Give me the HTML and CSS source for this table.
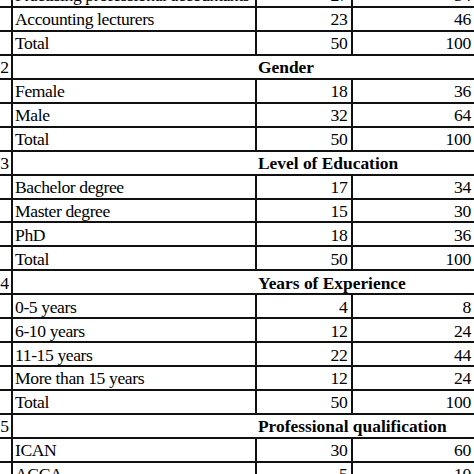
FILE: index.html
```html
<!DOCTYPE html>
<html lang="en">
<head>
<meta charset="utf-8">
<title>Respondent profile</title>
<link rel="stylesheet" href="styles.css">
</head>
<body>
<div class="table">
  <div class="row"><div class="c num"></div><div class="c lbl">Practising professional accountants</div><div class="c val">27</div><div class="c pct">54</div></div>
  <div class="row"><div class="c num"></div><div class="c lbl">Accounting lecturers</div><div class="c val">23</div><div class="c pct">46</div></div>
  <div class="row"><div class="c num"></div><div class="c lbl">Total</div><div class="c val">50</div><div class="c pct">100</div></div>
  <div class="row"><div class="c num">2</div><div class="c gap"></div><div class="c head">Gender</div></div>
  <div class="row"><div class="c num"></div><div class="c lbl">Female</div><div class="c val">18</div><div class="c pct">36</div></div>
  <div class="row"><div class="c num"></div><div class="c lbl">Male</div><div class="c val">32</div><div class="c pct">64</div></div>
  <div class="row"><div class="c num"></div><div class="c lbl">Total</div><div class="c val">50</div><div class="c pct">100</div></div>
  <div class="row"><div class="c num">3</div><div class="c gap"></div><div class="c head">Level of Education</div></div>
  <div class="row"><div class="c num"></div><div class="c lbl">Bachelor degree</div><div class="c val">17</div><div class="c pct">34</div></div>
  <div class="row"><div class="c num"></div><div class="c lbl">Master degree</div><div class="c val">15</div><div class="c pct">30</div></div>
  <div class="row"><div class="c num"></div><div class="c lbl">PhD</div><div class="c val">18</div><div class="c pct">36</div></div>
  <div class="row"><div class="c num"></div><div class="c lbl">Total</div><div class="c val">50</div><div class="c pct">100</div></div>
  <div class="row"><div class="c num">4</div><div class="c gap"></div><div class="c head">Years of Experience</div></div>
  <div class="row"><div class="c num"></div><div class="c lbl">0-5 years</div><div class="c val">4</div><div class="c pct">8</div></div>
  <div class="row"><div class="c num"></div><div class="c lbl">6-10 years</div><div class="c val">12</div><div class="c pct">24</div></div>
  <div class="row"><div class="c num"></div><div class="c lbl">11-15 years</div><div class="c val">22</div><div class="c pct">44</div></div>
  <div class="row"><div class="c num"></div><div class="c lbl">More than 15 years</div><div class="c val">12</div><div class="c pct">24</div></div>
  <div class="row"><div class="c num"></div><div class="c lbl">Total</div><div class="c val">50</div><div class="c pct">100</div></div>
  <div class="row"><div class="c num">5</div><div class="c gap"></div><div class="c head">Professional qualification</div></div>
  <div class="row"><div class="c num"></div><div class="c lbl">ICAN</div><div class="c val">30</div><div class="c pct">60</div></div>
  <div class="row"><div class="c num"></div><div class="c lbl">ACCA</div><div class="c val">5</div><div class="c pct">10</div></div>
</div>
</body>
</html>
```
FILE: styles.css
```css
html, body {
  margin: 0;
  padding: 0;
  width: 474px;
  height: 474px;
  overflow: hidden;
  background: #fff;
}

.table {
  margin-top: -15.95px;
  width: 476px;
  font-family: "Liberation Serif", "Times New Roman", serif;
  font-size: 17.6px;
  color: #000;
}

.row {
  display: grid;
  grid-template-columns: 13px 244px 96px 123px;
  height: 23.95px;
}

.c {
  box-sizing: border-box;
  height: 23.95px;
  border-bottom: 2px solid #111;
  border-right: 2px solid #111;
  padding-top: 1.4px;
  line-height: 20.5px;
  white-space: nowrap;
  overflow: hidden;
}

.num {
  text-align: right;
  padding-right: 2px;
}

.lbl {
  padding-left: 2px;
  letter-spacing: -0.4px;
}

.val {
  text-align: right;
  padding-right: 3.5px;
  letter-spacing: -0.3px;
}

.pct {
  text-align: right;
  padding-right: 3px;
  letter-spacing: -0.3px;
}

.gap {
  border-right: none;
}

.head {
  grid-column: 3 / 5;
  font-weight: bold;
  font-size: 17.4px;
  padding-left: 2px;
  overflow: visible;
  margin-left: -1px;
}
```
